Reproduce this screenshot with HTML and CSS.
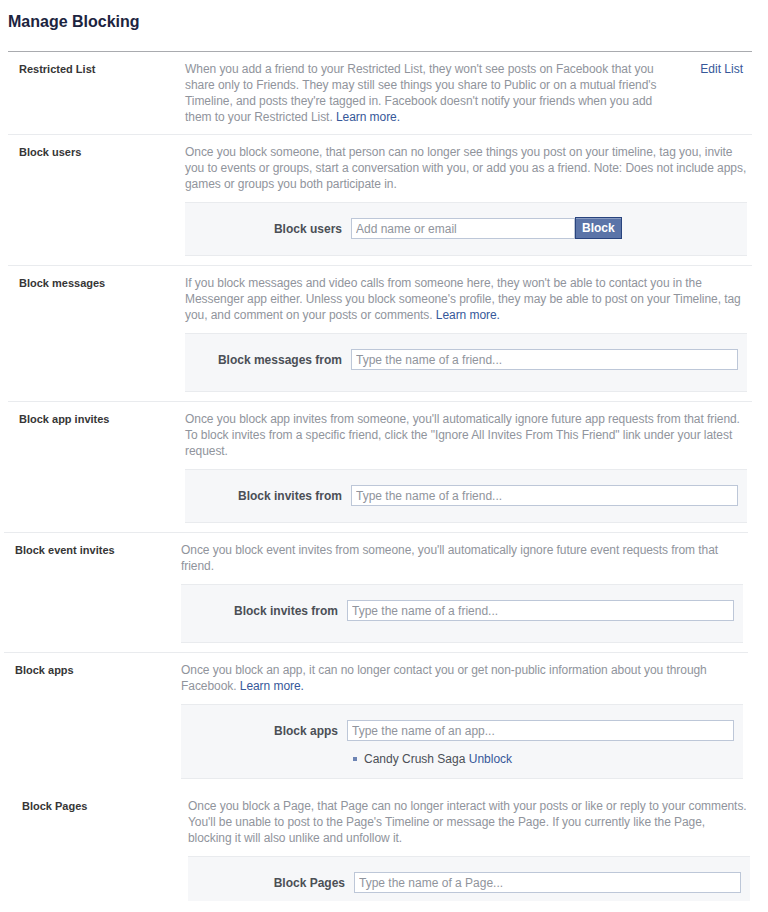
FILE: index.html
```html
<!DOCTYPE html>
<html lang="en">
<head>
<meta charset="utf-8">
<title>Manage Blocking</title>
<link rel="stylesheet" href="styles.css">
</head>
<body>
<div class="page">
  <h1 class="page-title">Manage Blocking</h1>
  <div class="settings">

    <section class="row">
      <div class="row-label">Restricted List</div>
      <div class="row-body row-body--action">
        <p class="desc">When you add a friend to your Restricted List, they won't see posts on Facebook that you share only to Friends. They may still see things you share to Public or on a mutual friend's Timeline, and posts they're tagged in. Facebook doesn't notify your friends when you add them to your Restricted List. <a class="link" href="#">Learn more.</a></p>
        <a class="action" href="#">Edit List</a>
      </div>
    </section>

    <section class="row">
      <div class="row-label">Block users</div>
      <div class="row-body">
        <p class="desc">Once you block someone, that person can no longer see things you post on your timeline, tag you, invite you to events or groups, start a conversation with you, or add you as a friend. Note: Does not include apps, games or groups you both participate in.</p>
        <div class="form-box">
          <label class="form-label">Block users</label>
          <div class="form-field form-field--inline">
            <input class="text-input text-input--short" type="text" placeholder="Add name or email">
            <button class="btn-confirm" type="button">Block</button>
          </div>
        </div>
      </div>
    </section>

    <section class="row">
      <div class="row-label">Block messages</div>
      <div class="row-body">
        <p class="desc">If you block messages and video calls from someone here, they won't be able to contact you in the Messenger app either. Unless you block someone's profile, they may be able to post on your Timeline, tag you, and comment on your posts or comments. <a class="link" href="#">Learn more.</a></p>
        <div class="form-box form-box--tall">
          <label class="form-label">Block messages from</label>
          <div class="form-field">
            <input class="text-input" type="text" placeholder="Type the name of a friend...">
          </div>
        </div>
      </div>
    </section>

    <section class="row">
      <div class="row-label">Block app invites</div>
      <div class="row-body">
        <p class="desc">Once you block app invites from someone, you'll automatically ignore future app requests from that friend. To block invites from a specific friend, click the "Ignore All Invites From This Friend" link under your latest request.</p>
        <div class="form-box">
          <label class="form-label">Block invites from</label>
          <div class="form-field">
            <input class="text-input" type="text" placeholder="Type the name of a friend...">
          </div>
        </div>
      </div>
    </section>

    <section class="row row--left">
      <div class="row-label">Block event invites</div>
      <div class="row-body">
        <p class="desc">Once you block event invites from someone, you'll automatically ignore future event requests from that friend.</p>
        <div class="form-box form-box--tall">
          <label class="form-label">Block invites from</label>
          <div class="form-field">
            <input class="text-input" type="text" placeholder="Type the name of a friend...">
          </div>
        </div>
      </div>
    </section>

    <section class="row row--left">
      <div class="row-label">Block apps</div>
      <div class="row-body">
        <p class="desc">Once you block an app, it can no longer contact you or get non-public information about you through Facebook. <a class="link" href="#">Learn more.</a></p>
        <div class="form-box form-box--list">
          <label class="form-label">Block apps</label>
          <div class="form-field">
            <input class="text-input" type="text" placeholder="Type the name of an app...">
          </div>
          <ul class="blocked-list">
            <li class="blocked-item">Candy Crush Saga&nbsp;<a class="link" href="#">Unblock</a></li>
          </ul>
        </div>
      </div>
    </section>

    <section class="row row--right row--last">
      <div class="row-label">Block Pages</div>
      <div class="row-body">
        <p class="desc">Once you block a Page, that Page can no longer interact with your posts or like or reply to your comments. You'll be unable to post to the Page's Timeline or message the Page. If you currently like the Page, blocking it will also unlike and unfollow it.</p>
        <div class="form-box form-box--cut">
          <label class="form-label">Block Pages</label>
          <div class="form-field">
            <input class="text-input" type="text" placeholder="Type the name of a Page...">
          </div>
        </div>
      </div>
    </section>

  </div>
</div>
</body>
</html>
```

FILE: styles.css
```css
* {
  box-sizing: border-box;
}

body {
  margin: 0;
  background: #ffffff;
  font-family: "Liberation Sans", Arial, Helvetica, sans-serif;
  font-size: 12px;
  color: #4b4f56;
}

.page {
  padding: 12px 16px 0 8px;
}

.page-title {
  margin: 0 0 19px;
  font-size: 16px;
  line-height: 20px;
  font-weight: bold;
  color: #1c2440;
}

.settings {
  border-top: 1px solid #a9abaf;
}

.row {
  display: grid;
  grid-template-columns: 177px 1fr;
  padding: 9px 5px 9px 0;
  border-top: 1px solid #e9ebee;
}

.row:first-child {
  border-top: 0;
}

.row--left {
  margin-left: -4px;
  margin-right: 4px;
}

.row--right {
  margin-left: 3px;
  margin-right: -3px;
  border-top-color: transparent;
}

.row--last {
  padding-bottom: 0;
}

.row-label {
  padding-left: 11px;
  font-size: 11px;
  font-weight: bold;
  line-height: 16px;
  color: #363636;
}

.desc {
  margin: 0;
  line-height: 16px;
  letter-spacing: -0.06px;
  color: #90949c;
}

.row-body--action {
  display: flex;
  align-items: flex-start;
}

.row-body--action .desc {
  flex: 1;
}

.action {
  margin: 0 4px 0 30px;
  line-height: 16px;
  color: #365899;
  text-decoration: none;
  white-space: nowrap;
}

.link {
  color: #365899;
  text-decoration: none;
}

.form-box {
  margin-top: 10px;
  display: grid;
  grid-template-columns: 157px 1fr;
  column-gap: 9px;
  align-items: center;
  padding: 15px 9px 16px 0;
  background: #f6f7f9;
  border-top: 1px solid #e9ebee;
  border-bottom: 1px solid #e9ebee;
}

.form-box--tall {
  padding-bottom: 21px;
}

.form-box--list {
  padding-bottom: 11px;
}

.form-box--cut {
  padding-bottom: 8px;
  border-bottom: 0;
}

.form-label {
  text-align: right;
  font-weight: bold;
  line-height: 16px;
  color: #4b4f56;
}

.form-field {
  display: flex;
}

.text-input {
  width: 100%;
  height: 21px;
  margin: 0;
  padding: 0 4px;
  border: 1px solid #bdc7d8;
  border-radius: 0;
  background: #ffffff;
  font-family: "Liberation Sans", Arial, Helvetica, sans-serif;
  font-size: 12px;
  color: #1d2129;
  outline: none;
}

.text-input::placeholder {
  color: #90949c;
  opacity: 1;
}

.text-input--short {
  width: 224px;
  flex: none;
}

.btn-confirm {
  height: 22px;
  margin: -1px 0 0;
  padding: 0 6px;
  border: 1px solid #29447e;
  border-radius: 0;
  background: #5b74a8;
  box-shadow: inset 0 1px 0 #8a9cc2;
  font-family: "Liberation Sans", Arial, Helvetica, sans-serif;
  font-size: 12px;
  font-weight: bold;
  line-height: 18px;
  color: #ffffff;
  cursor: pointer;
}

.blocked-list {
  grid-column: 2;
  list-style: none;
  margin: 10px 0 0;
  padding: 0 0 0 6px;
}

.blocked-item {
  display: flex;
  align-items: center;
  line-height: 16px;
  color: #4b4f56;
}

.blocked-item::before {
  content: "";
  width: 4px;
  height: 4px;
  margin-right: 7px;
  background: #6d84b4;
}
```
